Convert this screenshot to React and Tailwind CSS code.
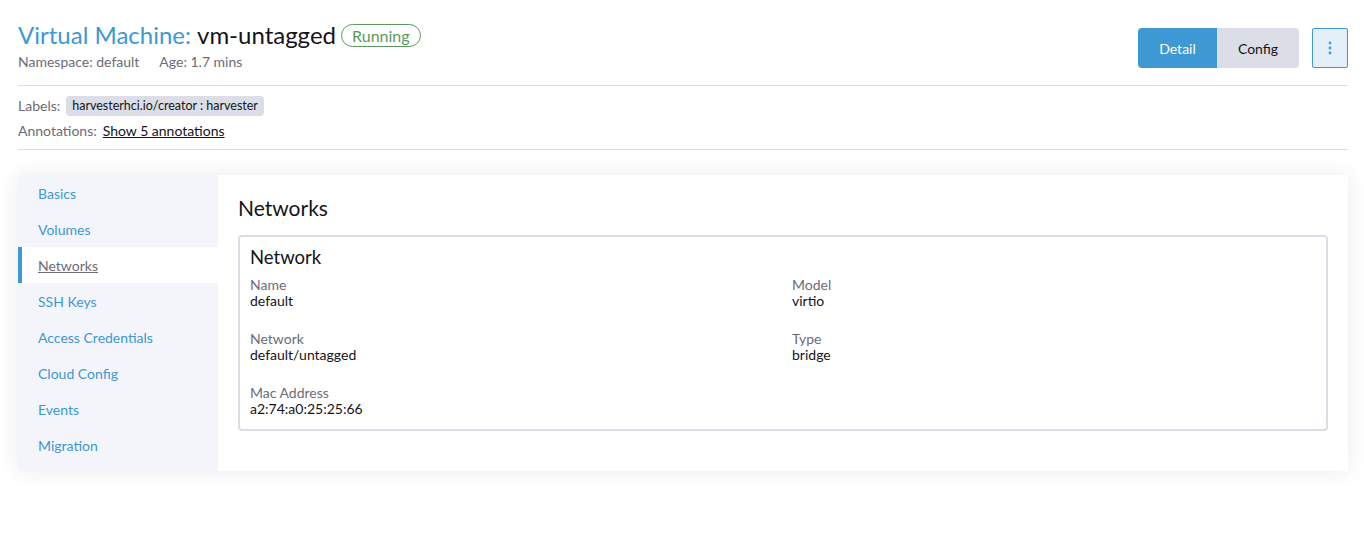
import React from "react";

const tabs = [
  "Basics",
  "Volumes",
  "Networks",
  "SSH Keys",
  "Access Credentials",
  "Cloud Config",
  "Events",
  "Migration",
];

const fields = [
  { label: "Name", value: "default" },
  { label: "Model", value: "virtio" },
  { label: "Network", value: "default/untagged" },
  { label: "Type", value: "bridge" },
  { label: "Mac Address", value: "a2:74:a0:25:25:66" },
];

export default function App() {
  return (
    <div className="min-h-[533px] bg-white pl-[18px] pr-[16px] pt-[20px] font-['Lato','Noto_Sans',sans-serif] text-[#141419]">
      <header className="flex items-start justify-between">
        <div>
          <h1 className="flex items-center text-[24px] leading-[30px]">
            <span className="text-[#3d98d3]">Virtual Machine:</span>
            <span className="ml-[6px]">vm-untagged</span>
            <span className="ml-[5px] rounded-full border border-[#5d995d] px-[10px] text-[16px] leading-[21px] text-[#5d995d]">
              Running
            </span>
          </h1>
          <div className="mt-[1px] flex gap-[20px] text-[14px] text-[#6c6c76]">
            <span>Namespace: default</span>
            <span>Age: 1.7 mins</span>
          </div>
        </div>
        <div className="mt-[8px] flex items-center gap-[13px]">
          <div className="flex overflow-hidden rounded-[4px] text-[14px]">
            <button className="h-[40px] w-[79px] bg-[#3d98d3] text-white">Detail</button>
            <button className="h-[40px] w-[82px] bg-[#dcdee7] text-[#141419]">Config</button>
          </div>
          <button className="flex h-[40px] w-[36px] items-center justify-center rounded-[2px] border border-[#3d98d3] bg-[#e3f0f9]">
            <svg width="4" height="14" viewBox="0 0 4 14" fill="#3d98d3">
              <circle cx="2" cy="2" r="1.4" />
              <circle cx="2" cy="7" r="1.4" />
              <circle cx="2" cy="12" r="1.4" />
            </svg>
          </button>
        </div>
      </header>

      <div className="mt-[13px] border-y border-[#dcdee7] pt-[9px] pb-[8px] text-[14px]">
        <div className="flex items-center">
          <span className="text-[#6c6c76]">Labels:</span>
          <span className="ml-[6px] rounded-[4px] bg-[#dcdee7] px-[6px] py-[2px] text-[12.5px] leading-[16px] text-[#141419]">
            harvesterhci.io/creator : harvester
          </span>
        </div>
        <div className="mt-[4px] flex items-center">
          <span className="text-[#6c6c76]">Annotations:</span>
          <a className="ml-[6px] text-[#141419] underline">Show 5 annotations</a>
        </div>
      </div>

      <div className="mt-[25px] flex shadow-[0_0_20px_rgba(40,40,90,0.09)]">
        <nav className="w-[200px] shrink-0 bg-[#f4f5fa] pb-[8px]">
          {tabs.map((t) => {
            const active = t === "Networks";
            return (
              <div
                key={t}
                className={
                  active
                    ? "flex h-[36px] items-center border-l-4 border-[#3d98d3] bg-white pl-[16px] text-[14px] text-[#6c6c76] underline"
                    : "flex h-[36px] items-center pl-[20px] text-[14px] text-[#3d98d3]"
                }
              >
                {t}
              </div>
            );
          })}
        </nav>
        <section className="flex-1 bg-white px-[20px] pt-[20px]">
          <h2 className="text-[21px] leading-[26px]">Networks</h2>
          <div className="mt-[14px] rounded-[4px] border-2 border-[#dcdee7] px-[10px] pt-[9px] pb-[12px]">
            <h3 className="text-[18.5px] leading-[22px]">Network</h3>
            <div className="mt-[9px] grid grid-cols-2 gap-x-[18px] gap-y-[22px] text-[14px] leading-[16px]">
              {fields.map((f) => (
                <div key={f.label}>
                  <div className="text-[#6c6c76]">{f.label}</div>
                  <div>{f.value}</div>
                </div>
              ))}
            </div>
          </div>
        </section>
      </div>
    </div>
  );
}
